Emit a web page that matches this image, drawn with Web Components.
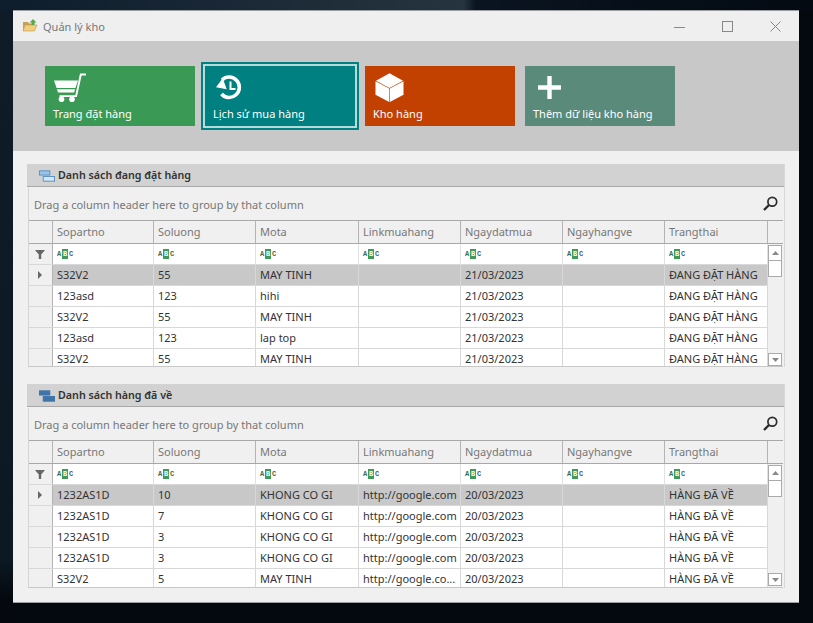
<!DOCTYPE html>
<html lang="vi">
<head>
<meta charset="utf-8">
<title>Quản lý kho</title>
<style>
  html, body { margin: 0; height: 100%; }
  body {
    background:
      linear-gradient(90deg, #0e1d2b 0%, #26343f 57%, #0a1420 58.5%, #030a12 100%) top / 100% 11px no-repeat,
      linear-gradient(180deg, #0f1c28 0%, #0c1822 90%, #05090f 96%) left / 13px 100% no-repeat,
      #04090f;
    font: 11px "Noto Sans", "Liberation Sans", sans-serif;
    overflow: hidden;
  }
  app-window { margin: 10px 0 0 13px; }
  #p2 { height: 204px; }
</style>
</head>
<body>
<app-window caption="Quản lý kho">
  <tile-button slot="tiles" color="#3a9a55" label="Trang đặt hàng" icon="cart"></tile-button>
  <tile-button slot="tiles" color="#008080" label="Lịch sử mua hàng" icon="history" active></tile-button>
  <tile-button slot="tiles" color="#c24100" label="Kho hàng" icon="box"></tile-button>
  <tile-button slot="tiles" color="#5a8a7a" label="Thêm dữ liệu kho hàng" icon="plus"></tile-button>
  <data-panel id="p1" caption="Danh sách đang đặt hàng" tone="light"></data-panel>
  <data-panel id="p2" caption="Danh sách hàng đã về" tone="dark"></data-panel>
</app-window>

<script>
class AppWindow extends HTMLElement {
  connectedCallback() {
    this.attachShadow({ mode: 'open' });
    this.shadowRoot.innerHTML = `
      <style>
        :host { display: flex; flex-direction: column; box-sizing: border-box; width: 786px; height: 593px; background: #f0f0f0; border-top: 1px solid #9a9ea3; border-bottom: 1px solid #9a9ea3; }
        .title { height: 30px; flex: none; display: flex; align-items: center; background: #efefef; color: #777; font-size: 11px; }
        .title svg.logo { margin: 0 5px 0 9px; }
        .title span { flex: 1; }
        .ctl { width: 48px; height: 30px; display: flex; align-items: center; justify-content: center; }
        .ribbon { height: 110px; flex: none; box-sizing: border-box; background: #c8c8c8; padding: 25px 0 0 32px; display: flex; gap: 10px; }
        .body { flex: 1; display: flex; flex-direction: column; gap: 17px; padding: 13px 14px 0 14px; }
      </style>
      <div class="title">
        <svg class="logo" width="16" height="14" viewBox="0 0 16 14">
          <path d="M1 3h5l1 1.5h5V12H1z" fill="#c9a14e"/>
          <path d="M1 12l2-6h12l-2.5 6z" fill="#f0cf83" stroke="#c29a4a" stroke-width=".6"/>
          <path d="M11 0l3.5 3.5H12.6V6H9.6V3.5H7.7z" fill="#5aa84a"/>
        </svg>
        <span>${this.getAttribute('caption')}</span>
        <div class="ctl"><svg width="11" height="11"><path d="M0 6.5h11" stroke="#888"/></svg></div>
        <div class="ctl"><svg width="11" height="11"><rect x=".5" y=".5" width="10" height="10" fill="none" stroke="#888"/></svg></div>
        <div class="ctl"><svg width="11" height="11"><path d="M.5.5l10 10M10.5.5l-10 10" stroke="#888"/></svg></div>
      </div>
      <div class="ribbon"><slot name="tiles"></slot></div>
      <div class="body"><slot></slot></div>
    `;
  }
}

const tileIcons = {
  cart: `<svg width="32" height="29" viewBox="0 0 32 29" fill="#fff">
    <path d="M0 7.5h24l-2.6 7.6H2.6z"/><path d="M2.9 16.2h18.2l-1 3.4H4z"/>
    <path d="M5.5 22.2h15.8L26 .5h6v1.9h-4.4l-4.7 21.6H5.5z"/>
    <circle cx="7.5" cy="26.2" r="2.8"/><circle cx="18" cy="26.2" r="2.8"/></svg>`,
  history: `<svg width="27" height="25" viewBox="0 0 27 25">
    <path d="M5.5 19A10.2 10.2 0 1 0 6 5" fill="none" stroke="#fff" stroke-width="3.6"/>
    <path d="M0 12.3L6.7 3.3l4 11z" fill="#fff"/>
    <path d="M14.5 6.5V14h5" fill="none" stroke="#fff" stroke-width="2"/></svg>`,
  box: `<svg width="29" height="29" viewBox="0 0 30 30">
    <path d="M15 .3L29 8 15 15.4 1 8z" fill="#fff"/><path d="M.5 8.6l14.2 7.4v14L.5 22.6z" fill="#fff"/><path d="M29.5 8.6l-14.2 7.4v14l14.2-7.4z" fill="#fff"/></svg>`,
  plus: `<svg width="23" height="23" viewBox="0 0 23 23" fill="#fff"><path d="M9.3 0h4.4v9.3H23v4.4h-9.3V23H9.3v-9.3H0V9.3h9.3z"/></svg>`
};

class TileButton extends HTMLElement {
  connectedCallback() {
    this.attachShadow({ mode: 'open' });
    const c = this.getAttribute('color');
    const key = this.getAttribute('icon');
    this.shadowRoot.innerHTML = `
      <style>
        :host { display: flex; flex-direction: column; box-sizing: border-box; position: relative; width: 150px; height: 60px; background: ${c}; color: #fff; font-size: 11px; padding: 0 8px; }
        .ic { height: 40px; box-sizing: border-box; padding-top: 2px; display: flex; align-items: center; flex: none; }
        .cart { margin-left: 1px; }
        .box { margin-left: 2px; }
        .history { margin-left: 3px; }
        .plus { margin-left: 5px; }
        .lbl { line-height: 16px; white-space: nowrap; }
        .ring { position: absolute; inset: -4px; border: 2px solid ${c}; box-sizing: border-box; }
        .ring::after { content: ""; position: absolute; inset: 0; border: 2px solid #b7dada; }
      </style>
      ${this.hasAttribute('active') ? '<div class="ring"></div>' : ''}
      <div class="ic ${key}">${tileIcons[key]}</div>
      <div class="lbl">${this.getAttribute('label')}</div>
    `;
  }
}

class DataPanel extends HTMLElement {
  connectedCallback() {
    this.attachShadow({ mode: 'open' });
    const dark = this.getAttribute('tone') === 'dark';
    const a = dark ? '#3f74a8' : '#9cc3e6';
    const b = dark ? '#3f74a8' : '#d3e6f6';
    const s = dark ? '#3f74a8' : '#5a8fc4';
    this.shadowRoot.innerHTML = `
      <style>
        :host { display: flex; flex-direction: column; box-sizing: border-box; height: 203px; flex: none; background: #f0f0f0; border-right: 1px solid #d8d8d8; }
        .cap { height: 22px; flex: none; background: #d2d2d2; display: flex; align-items: center; font-weight: 600; color: #333; font-size: 10.7px; border-bottom: 1px solid #a8a8a8; margin-bottom: 1px; }
        .cap svg { margin: 2px 3px 0 12px; }
        .cap span { margin-top: -1px; }
        .inner { margin-left: 1px; border-left: 1px solid #d4d4d4; border-bottom: 1px solid #c8c8c8; margin-right: 1px; flex: 1; min-height: 0; overflow: hidden; }
      </style>
      <div class="cap">
        <svg width="16" height="12" viewBox="0 0 17 12">
          <rect x=".5" y=".5" width="11" height="4.5" fill="${a}" stroke="${s}"/>
          <rect x="4.5" y="6.5" width="12" height="5" fill="${b}" stroke="${s}"/>
        </svg>
        <span>${this.getAttribute('caption')}</span>
      </div>
      <div class="inner"></div>
    `;
    const grid = document.createElement('data-grid');
    grid.rows = this.rows;
    this.shadowRoot.querySelector('.inner').append(grid);
  }
}

const columns = ['Sopartno', 'Soluong', 'Mota', 'Linkmuahang', 'Ngaydatmua', 'Ngayhangve', 'Trangthai'];
const abc = '<span class="abc"><i>A</i><b>B</b><i>C</i></span>';

class DataGrid extends HTMLElement {
  connectedCallback() {
    this.attachShadow({ mode: 'open' });
    const head = columns.map(c => `<div class="hc">${c}</div>`).join('');
    const filt = columns.map(() => `<div class="fc">${abc}</div>`).join('');
    const body = this.rows.map((r, i) => `
      <div class="row${i === 0 ? ' sel' : ''}">
        <div class="ind">${i === 0 ? '<svg width="4" height="8"><path d="M0 0l4 4-4 4z" fill="#666"/></svg>' : ''}</div>
        ${r.map(t => `<div class="c">${t}</div>`).join('')}
      </div>`).join('');
    this.shadowRoot.innerHTML = `
      <style>
        :host { display: block; color: #333; font-size: 11px; --cols: 24px 101px 102px 103px 102px 102px 102px 103px; }
        .group { height: 32px; display: flex; align-items: center; justify-content: space-between; padding: 0 5px; color: #777; border-bottom: 1px solid #a8a8a8; }
        .group svg { margin-top: -2px; }
        .gr { display: grid; grid-template-columns: var(--cols); }
        .hd { height: 22px; background: #f0f0f0; border-bottom: 1px solid #a8a8a8; }
        .hc, .hi { border-right: 1px solid #b4b4b4; color: #777; padding-left: 4px; line-height: 22px; box-sizing: border-box; }
        .hi { padding: 0; }
        .cols { display: flex; }
        .main { width: 739px; flex: none; }
        .fl { height: 20px; background: #fff; border-bottom: 1px solid #d8d8d8; }
        .fi { background: #f0f0f0; border-right: 1px solid #b4b4b4; padding-right: 2px; display: flex; align-items: center; justify-content: center; }
        .fc { border-right: 1px solid #e2e2e2; padding-left: 4px; display: flex; align-items: center; }
        .abc { display: inline-flex; align-items: center; font: 700 7px "Liberation Mono", monospace; color: #3c6a50; }
        .abc i { font-style: normal; width: 4px; text-align: center; }
        .abc b { width: 6px; height: 10px; line-height: 10px; margin: 0 1px; text-align: center; background: #3f9a5a; color: #fff; }
        .row { display: grid; grid-template-columns: var(--cols); height: 21px; box-sizing: border-box; background: #fff; border-bottom: 1px solid #d8d8d8; line-height: 20px; }
        .row.sel { background: #c8c8c8; }
        .ind { background: #f0f0f0; border-right: 1px solid #b4b4b4; padding-right: 2px; display: flex; align-items: center; justify-content: center; }
        .c { border-right: 1px solid #d8d8d8; padding-left: 4px; white-space: nowrap; overflow: hidden; box-sizing: border-box; }
        .sb { width: 14px; flex: none; display: flex; flex-direction: column; height: 122px; box-sizing: border-box; padding-top: 1px; }
        .sb div { box-sizing: border-box; width: 14px; border: 1px solid #aaa; background: #fff; display: flex; align-items: center; justify-content: center; }
        .up { height: 16px; flex: none; }
        .dn { height: 13px; flex: none; }
        .th { height: 16px; flex: none; border-top: 0 !important; }
        .sp { flex: 1; border: 0 !important; background: transparent !important; }
      </style>
      <div class="group">
        <span>Drag a column header here to group by that column</span>
        <svg width="15" height="15" viewBox="0 0 15 15"><circle cx="9.3" cy="5.7" r="4.4" fill="none" stroke="#2c2c2c" stroke-width="1.7"/><path d="M6 9L1 14" stroke="#2c2c2c" stroke-width="2.4"/></svg>
      </div>
      <div class="gr hd"><div class="hi"></div>${head}</div>
      <div class="cols">
        <div class="main">
          <div class="gr fl"><div class="fi"><svg width="10" height="9"><path d="M0 0h10L6.2 4.5V9H3.8V4.5z" fill="#666"/></svg></div>${filt}</div>
          ${body}
        </div>
        <div class="sb">
          <div class="up"><svg width="7" height="4"><path d="M3.5 0L7 4H0z" fill="#888"/></svg></div>
          <div class="th"></div>
          <div class="sp"></div>
          <div class="dn"><svg width="7" height="4"><path d="M0 0h7L3.5 4z" fill="#888"/></svg></div>
        </div>
      </div>
    `;
  }
}

const mk = (st, list) => list.map(([a, b, c, d, e]) => [a, b, c, d || '', e, '', st]);
document.getElementById('p1').rows = mk('ĐANG ĐẶT HÀNG', [
  ['S32V2', '55', 'MAY TINH', '', '21/03/2023'],
  ['123asd', '123', 'hihi', '', '21/03/2023'],
  ['S32V2', '55', 'MAY TINH', '', '21/03/2023'],
  ['123asd', '123', 'lap top', '', '21/03/2023'],
  ['S32V2', '55', 'MAY TINH', '', '21/03/2023']
]);
document.getElementById('p2').rows = mk('HÀNG ĐÃ VỀ', [
  ['1232AS1D', '10', 'KHONG CO GI', 'http://google.com', '20/03/2023'],
  ['1232AS1D', '7', 'KHONG CO GI', 'http://google.com', '20/03/2023'],
  ['1232AS1D', '3', 'KHONG CO GI', 'http://google.com', '20/03/2023'],
  ['1232AS1D', '3', 'KHONG CO GI', 'http://google.com', '20/03/2023'],
  ['S32V2', '5', 'MAY TINH', 'http://google.co...', '20/03/2023']
]);

customElements.define('data-grid', DataGrid);
customElements.define('data-panel', DataPanel);
customElements.define('tile-button', TileButton);
customElements.define('app-window', AppWindow);
</script>
</body>
</html>
